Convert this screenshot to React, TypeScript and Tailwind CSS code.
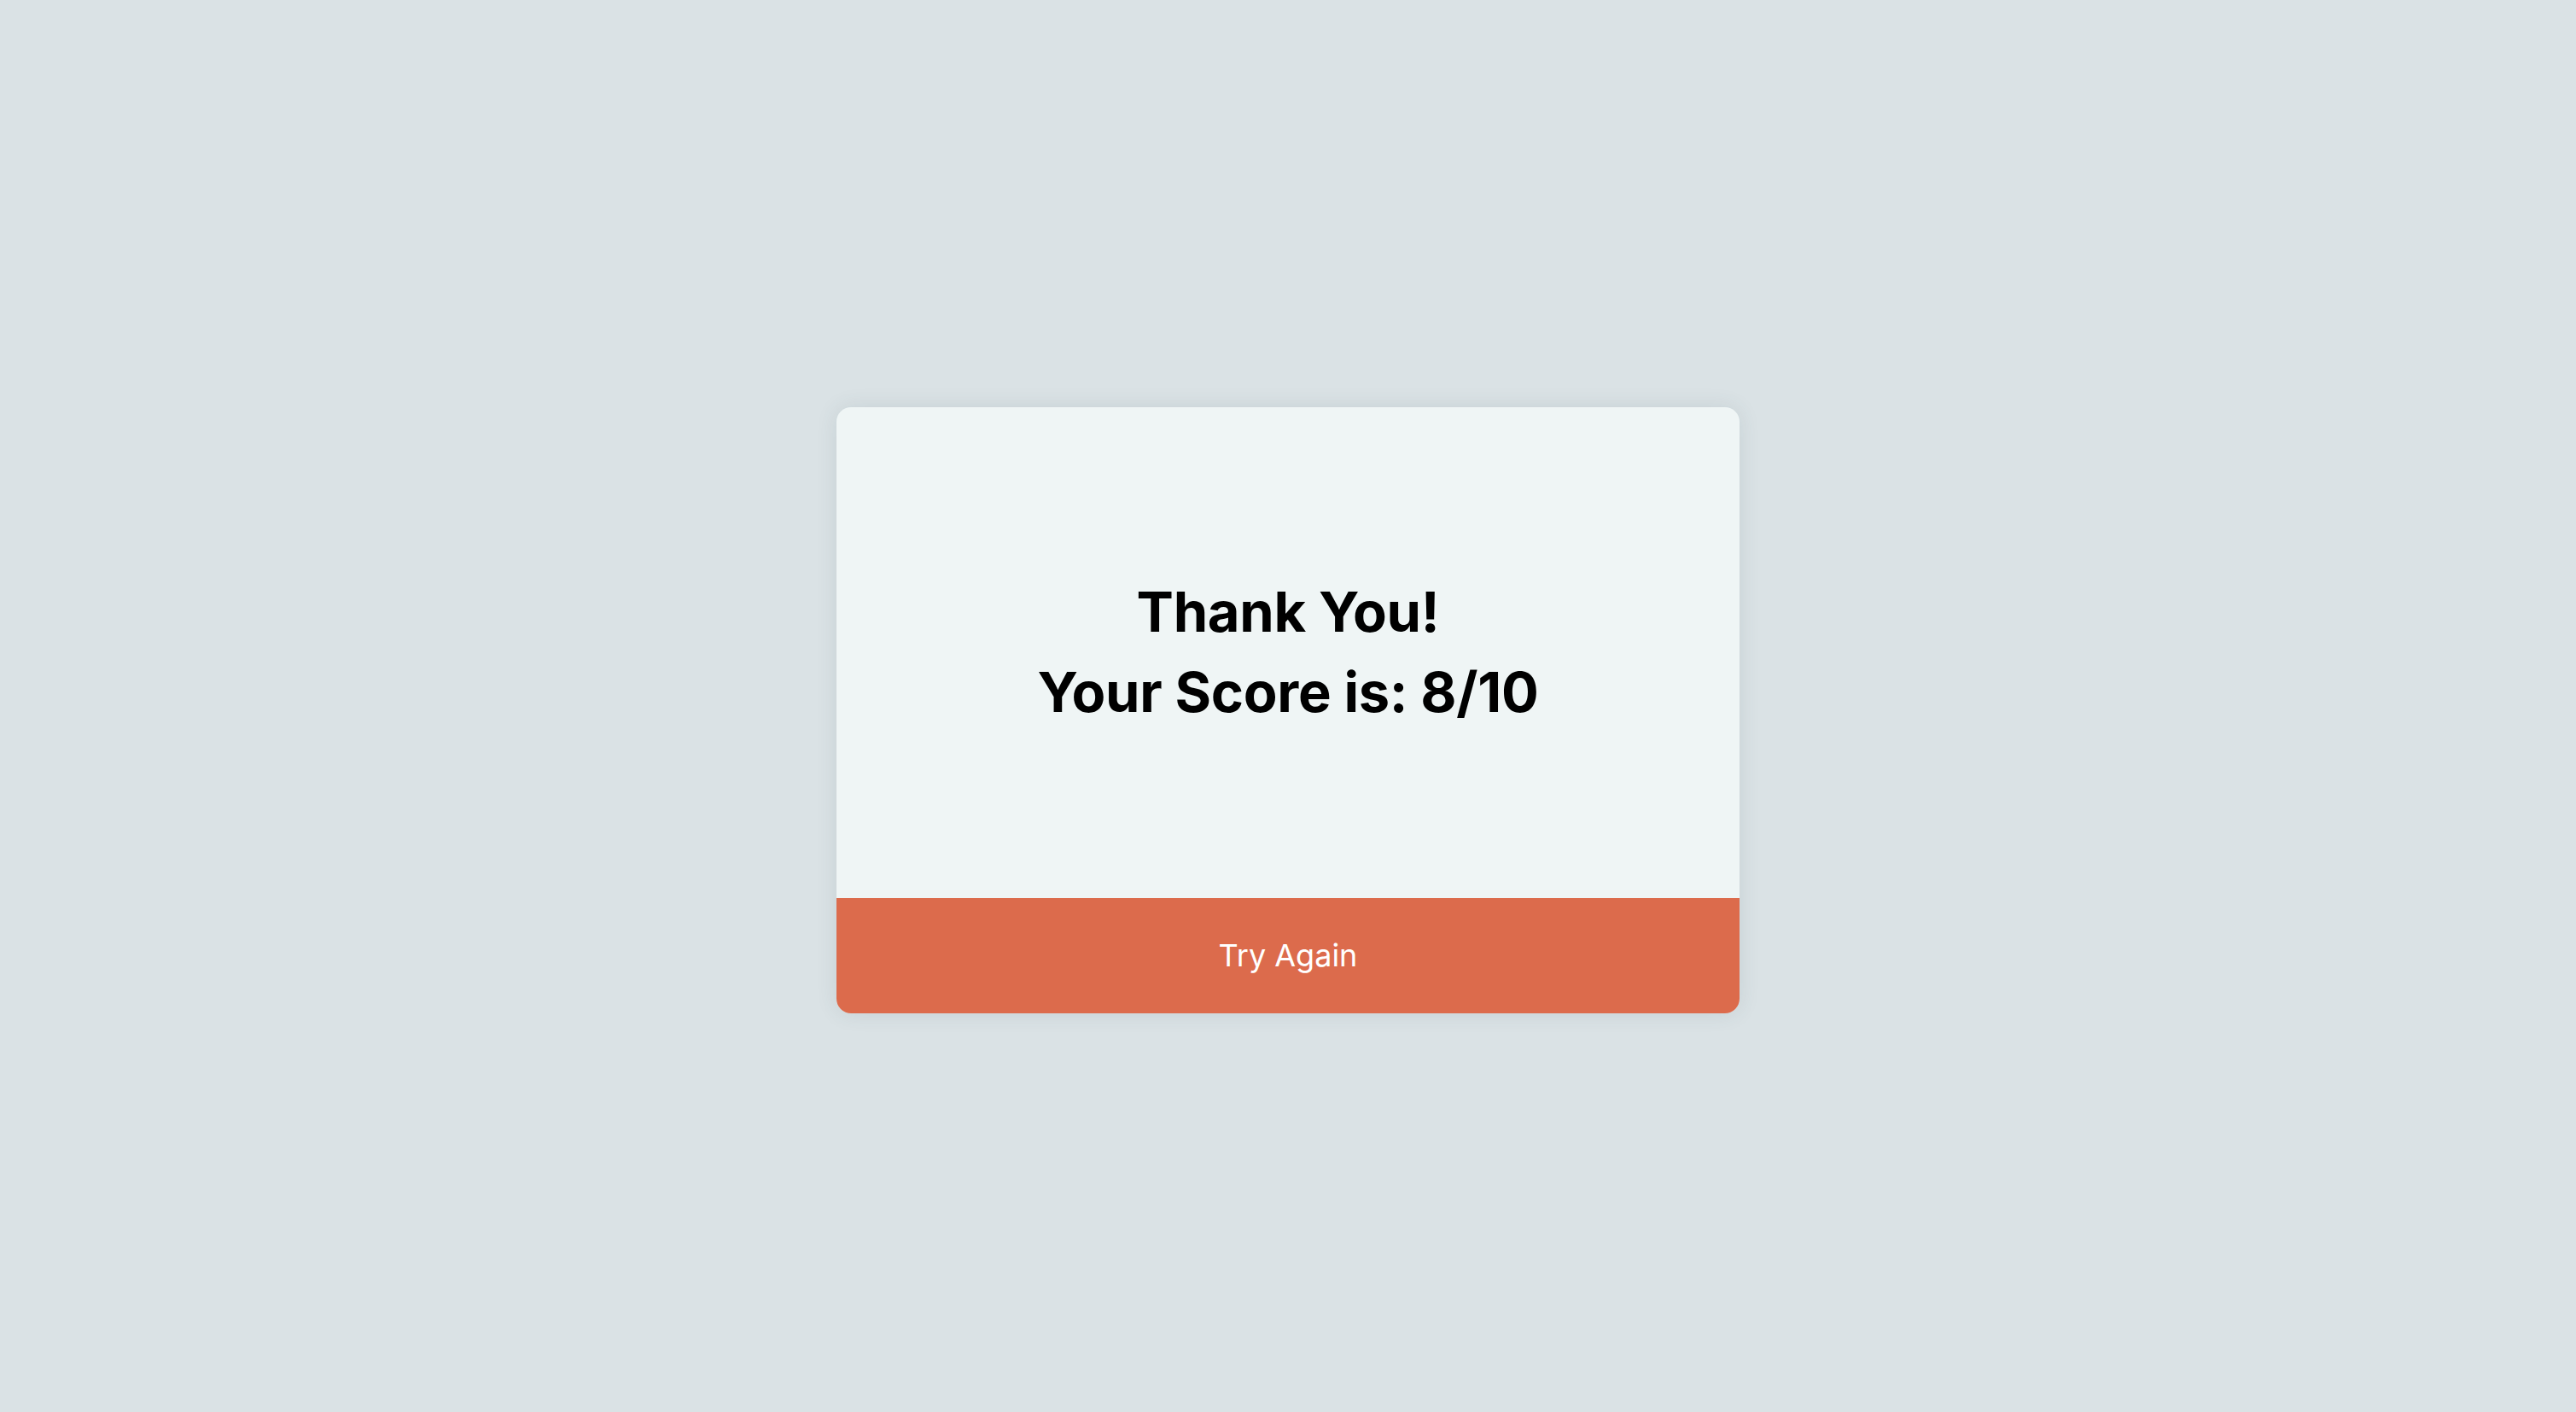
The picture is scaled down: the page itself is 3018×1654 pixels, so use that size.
export default function App() {
  return (
    <div
      className="min-h-screen w-full flex items-center justify-center bg-[#dae2e5] pt-[9px]"
      style={{ fontFamily: "Inter, 'Noto Sans', sans-serif" }}
    >
      <div className="w-[1058px] rounded-[17px] overflow-hidden bg-[#eff5f5] shadow-[0_0_24px_rgba(60,80,90,0.12)] flex flex-col">
        <div className="h-[575px] flex flex-col items-center justify-center text-black">
          <h1 className="text-[65px] leading-[94px] font-bold tracking-[-0.3px] text-center">
            Thank You!
          </h1>
          <h2 className="text-[65px] leading-[94px] font-bold tracking-[-0.3px] text-center">
            Your Score is: 8/10
          </h2>
        </div>
        <button className="h-[135px] w-full bg-[#dc6b4c] text-white text-[36px] font-normal flex items-center justify-center">
          Try Again
        </button>
      </div>
    </div>
  );
}
